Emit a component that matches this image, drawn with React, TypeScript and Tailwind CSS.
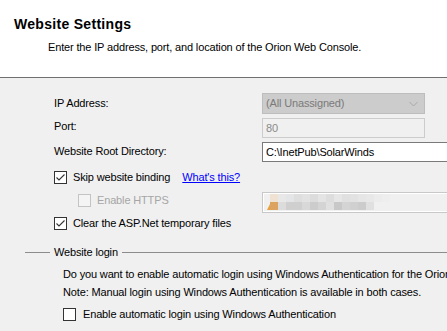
import React from "react";

const font = { fontFamily: '"Liberation Sans", Arial, sans-serif' };

function Check({ checked, disabled }: { checked?: boolean; disabled?: boolean }) {
  return (
    <div
      className={
        "w-[13px] h-[13px] shrink-0 border flex items-center justify-center " +
        (disabled ? "border-[#c4c4c4] bg-[#f4f4f4]" : "border-[#333333] bg-white")
      }
    >
      {checked && (
        <svg width="11" height="11" viewBox="0 0 11 11">
          <polyline points="1.5,5.5 4,8 9.5,2.5" fill="none" stroke="#333333" strokeWidth="1.1" />
        </svg>
      )}
    </div>
  );
}

const row1 = ["#efe2d2", "#e8e8e8", "#e4e5e6", "#dedede", "#e2e2e2", "#dcdcdc", "#e4e4e4", "#dddddd", "#e6e6e6", "#e0e0e0", "#e2e2e2", "#e6e6e6", "#e8e8e8", "#ececec", "#eeeeee"];
const row2 = ["#dba35f", "#dcdcdc", "#cfcfcf", "#cfcfcf", "#d8d8d8", "#cccccc", "#d4d4d4", "#e0e0e0", "#c8c8c8", "#d4d4d4", "#d0d0d0", "#cccccc", "#e0e0e0"];

function Blurred() {
  return (
    <svg width="140" height="17" viewBox="0 0 140 17">
      {row1.map((c, i) => (
        <rect key={"a" + i} x={6 + i * 8} y={0} width={8} height={8} fill={c} />
      ))}
      {row2.map((c, i) => (
        <rect key={"b" + i} x={6 + i * 8} y={8} width={8} height={8} fill={c} />
      ))}
      <polygon points="3,16 6,10 6,16" fill="#e8a040" />
    </svg>
  );
}

export default function App() {
  return (
    <div className="w-[447px] h-[331px] overflow-hidden bg-[#f0f0f0] text-[11px] tracking-[-0.15px] text-black leading-none" style={font}>
      <div className="h-[78px] bg-white border-b border-[#707070] flex flex-col">
        <div className="pl-[14px] pt-[17px] text-[14px] tracking-[0.3px] font-bold leading-[14px]">Website Settings</div>
        <div className="pl-[48px] pt-[10px] leading-[13px]">Enter the IP address, port, and location of the Orion Web Console.</div>
      </div>

      <div className="flex flex-col">
        <div className="mt-[15px] h-[21px] flex items-center">
          <div className="w-[262px] pl-[54px]">IP Address:</div>
          <div className="w-[163px] h-[21px] bg-[#cccccc] border border-[#bdbdbd] flex items-center justify-between pl-[3px] pr-[6px] text-[#7a7a7a]">
            <span>(All Unassigned)</span>
            <svg width="9" height="6" viewBox="0 0 9 6">
              <polyline points="0.5,1 4.5,5 8.5,1" fill="none" stroke="#a8a8a8" strokeWidth="1" />
            </svg>
          </div>
        </div>
        <div className="mt-[4px] h-[20px] flex items-center">
          <div className="w-[262px] pl-[54px] -mt-[3px]">Port:</div>
          <div className="w-[163px] h-[20px] bg-[#f0f0f0] border border-[#cccccc] flex items-center pl-[3px] text-[#8a8a8a]">80</div>
        </div>
        <div className="mt-[4px] h-[20px] flex items-center">
          <div className="w-[262px] pl-[54px] -mt-[2px]">Website Root Directory:</div>
          <div className="flex-1 h-[20px] bg-white border border-r-0 border-[#7a7a7a] flex items-center pl-[3px]">C:\InetPub\SolarWinds</div>
        </div>

        <div className="mt-[6px] h-[18px] flex items-center pl-[54px]">
          <Check checked />
          <span className="ml-[6px]">Skip website binding</span>
          <span className="ml-[12px] text-[#0000ff] underline">What's this?</span>
        </div>

        <div className="mt-[6px] h-[21px] flex items-start">
          <div className="w-[262px] pl-[78px] pt-[2px] flex items-center">
            <Check disabled />
            <span className="ml-[6px] text-[#a6a6a6]">Enable HTTPS</span>
          </div>
          <div className="flex-1 h-[21px] border border-r-0 border-[#c8c8c8] bg-[#f0f0f0]">
            <div className="h-full border border-r-0 border-white flex items-center">
              <Blurred />
            </div>
          </div>
        </div>

        <div className="mt-[1px] h-[18px] flex items-center pl-[54px]">
          <Check checked />
          <span className="ml-[6px]">Clear the ASP.Net temporary files</span>
        </div>

        <div className="mt-[13px] h-[14px] flex items-center">
          <div className="ml-[25px] w-[25px] h-px bg-[#8c8c8c]" />
          <span className="ml-[4px]">Website login</span>
          <div className="ml-[4px] flex-1 h-px bg-[#8c8c8c]" />
        </div>

        <div className="mt-[6px] h-[18px] flex items-center pl-[63px] whitespace-nowrap">
          Do you want to enable automatic login using Windows Authentication for the Orion Web Console?
        </div>
        <div className="h-[18px] flex items-center pl-[63px] whitespace-nowrap">
          Note: Manual login using Windows Authentication is available in both cases.
        </div>
        <div className="mt-[4px] h-[18px] flex items-center pl-[63px]">
          <Check />
          <span className="ml-[7px]">Enable automatic login using Windows Authentication</span>
        </div>
      </div>
    </div>
  );
}
